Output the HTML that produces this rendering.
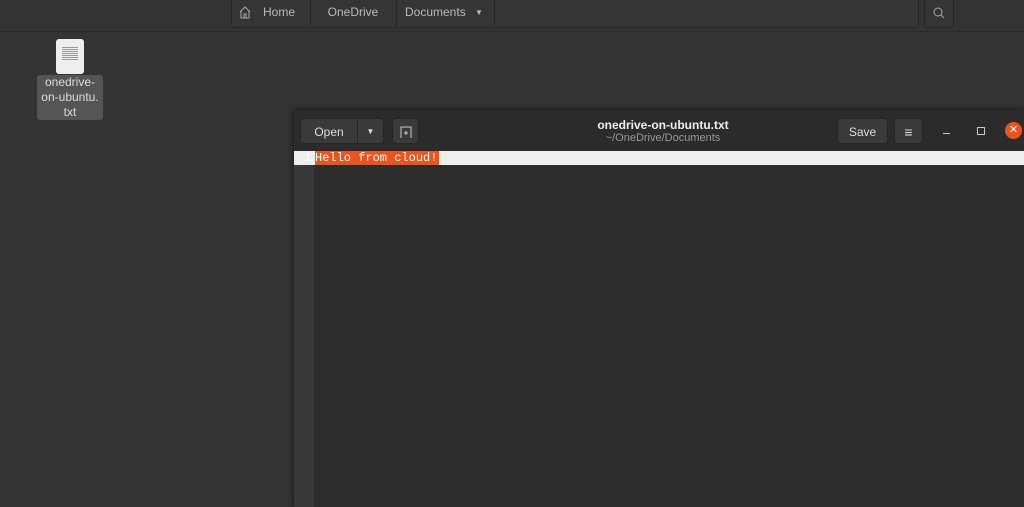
<!DOCTYPE html>
<html><head><style>
body{margin:0;width:1024px;height:507px;overflow:hidden;background:#333;font-family:"Liberation Sans",sans-serif;position:relative}
.top{position:absolute;left:0;top:0;width:1024px;height:31px;background:#333;border-bottom:1px solid #2a2a2a}
.path{position:absolute;left:231px;top:-2px;width:686px;height:28px;border:1px solid #262626;border-radius:4px;background:#353535}
.crumb{position:absolute;top:0;height:27px;line-height:27px;color:#bbb;font-size:12px;border-right:1px solid #262626}
.search{position:absolute;left:924px;top:-2px;width:28px;height:28px;border:1px solid #262626;border-radius:4px;background:#353535}
.win{position:absolute;left:294px;top:110px;width:730px;height:397px;background:#2d2d2d;box-shadow:0 0 6px #111}
.hdr{position:absolute;left:0;top:0;width:730px;height:41px;background:#2b2b2b;border-bottom:1px solid #1e1e1e}
.btn{position:absolute;top:8px;height:26px;background:#3a3a3a;border:1px solid #262626;border-radius:4px;color:#ddd;font-size:12px;text-align:center;line-height:26px;box-sizing:border-box}
.gut{position:absolute;left:0;top:41px;width:20px;height:356px;background:#383838}
.line{position:absolute;left:0;top:41px;width:730px;height:14px;background:#eeeeec}
</style></head><body>
<div class="top">
 <div class="path">
  <div class="crumb" style="left:0;width:78px"><svg style="position:absolute;left:7px;top:7px" width="12" height="13" viewBox="0 0 12 13"><path d="M1 6 L6 1 L11 6 M2 5 V12 H10 V5 M5 12 V8 H7 V12" fill="none" stroke="#aaa" stroke-width="1"/></svg><span style="position:absolute;left:31px">Home</span></div>
  <div class="crumb" style="left:78px;width:86px;text-align:center">OneDrive</div>
  <div class="crumb" style="left:164px;width:98px"><span style="position:absolute;left:9px">Documents</span><span style="position:absolute;left:79px;font-size:8px">▼</span></div>
 </div>
 <div class="search"><svg style="position:absolute;left:8px;top:8px" width="12" height="12"><circle cx="5" cy="5" r="4" fill="none" stroke="#aaa"/><path d="M8 8 L11 11" stroke="#aaa"/></svg></div>
</div>
<div style="position:absolute;left:56px;top:39px;width:28px;height:35px;background:#eee;border-radius:3px"><div style="margin:8px 6px;height:13px;background:repeating-linear-gradient(#999 0 1px,transparent 1px 2px)"></div></div>
<div style="position:absolute;left:37px;top:75px;width:66px;height:45px;background:#555;border-radius:3px;color:#ddd;font-size:12px;text-align:center;line-height:15px">onedrive-<br>on-ubuntu.<br>txt</div>
<div class="win">
 <div class="hdr">
  <div class="btn" style="left:6px;width:58px;border-radius:4px 0 0 4px">Open</div>
  <div class="btn" style="left:63px;width:27px;border-radius:0 4px 4px 0;font-size:8px">▼</div>
  <div class="btn" style="left:98px;width:27px"><svg width="12" height="12" style="margin-top:7px"><path d="M1 12 V1 H11 V12 M4 7 H8 M6 5 V9" fill="none" stroke="#ccc"/></svg></div>
  <div style="position:absolute;left:0;width:738px;top:8px;text-align:center;color:#eee;font-size:12px;font-weight:bold">onedrive-on-ubuntu.txt</div>
  <div style="position:absolute;left:0;width:738px;top:22px;text-align:center;color:#999;font-size:11px">~/OneDrive/Documents</div>
  <div class="btn" style="left:543px;width:51px">Save</div>
  <div class="btn" style="left:600px;width:29px;font-size:14px">≡</div>
  <div style="position:absolute;left:649px;top:23px;width:7px;height:1px;background:#ccc"></div>
  <div style="position:absolute;left:683px;top:17px;width:6px;height:6px;border:1px solid #ccc"></div>
  <div style="position:absolute;left:711px;top:12px;width:17px;height:17px;border-radius:50%;background:#e95420;color:#fff;font-size:11px;text-align:center;line-height:17px">✕</div>
 </div>
 <div class="gut"></div>
 <div class="line"></div>
 <div style="position:absolute;left:10px;top:41px;font-family:'Liberation Mono',monospace;font-size:12px;line-height:14px;color:#fff">1</div>
 <div style="position:absolute;left:21px;top:41px;height:14px;background:#e95420;font-family:'Liberation Mono',monospace;font-size:12px;line-height:14px;color:#fff;padding-right:2px">Hello from cloud!</div>
</div>
</body></html>
